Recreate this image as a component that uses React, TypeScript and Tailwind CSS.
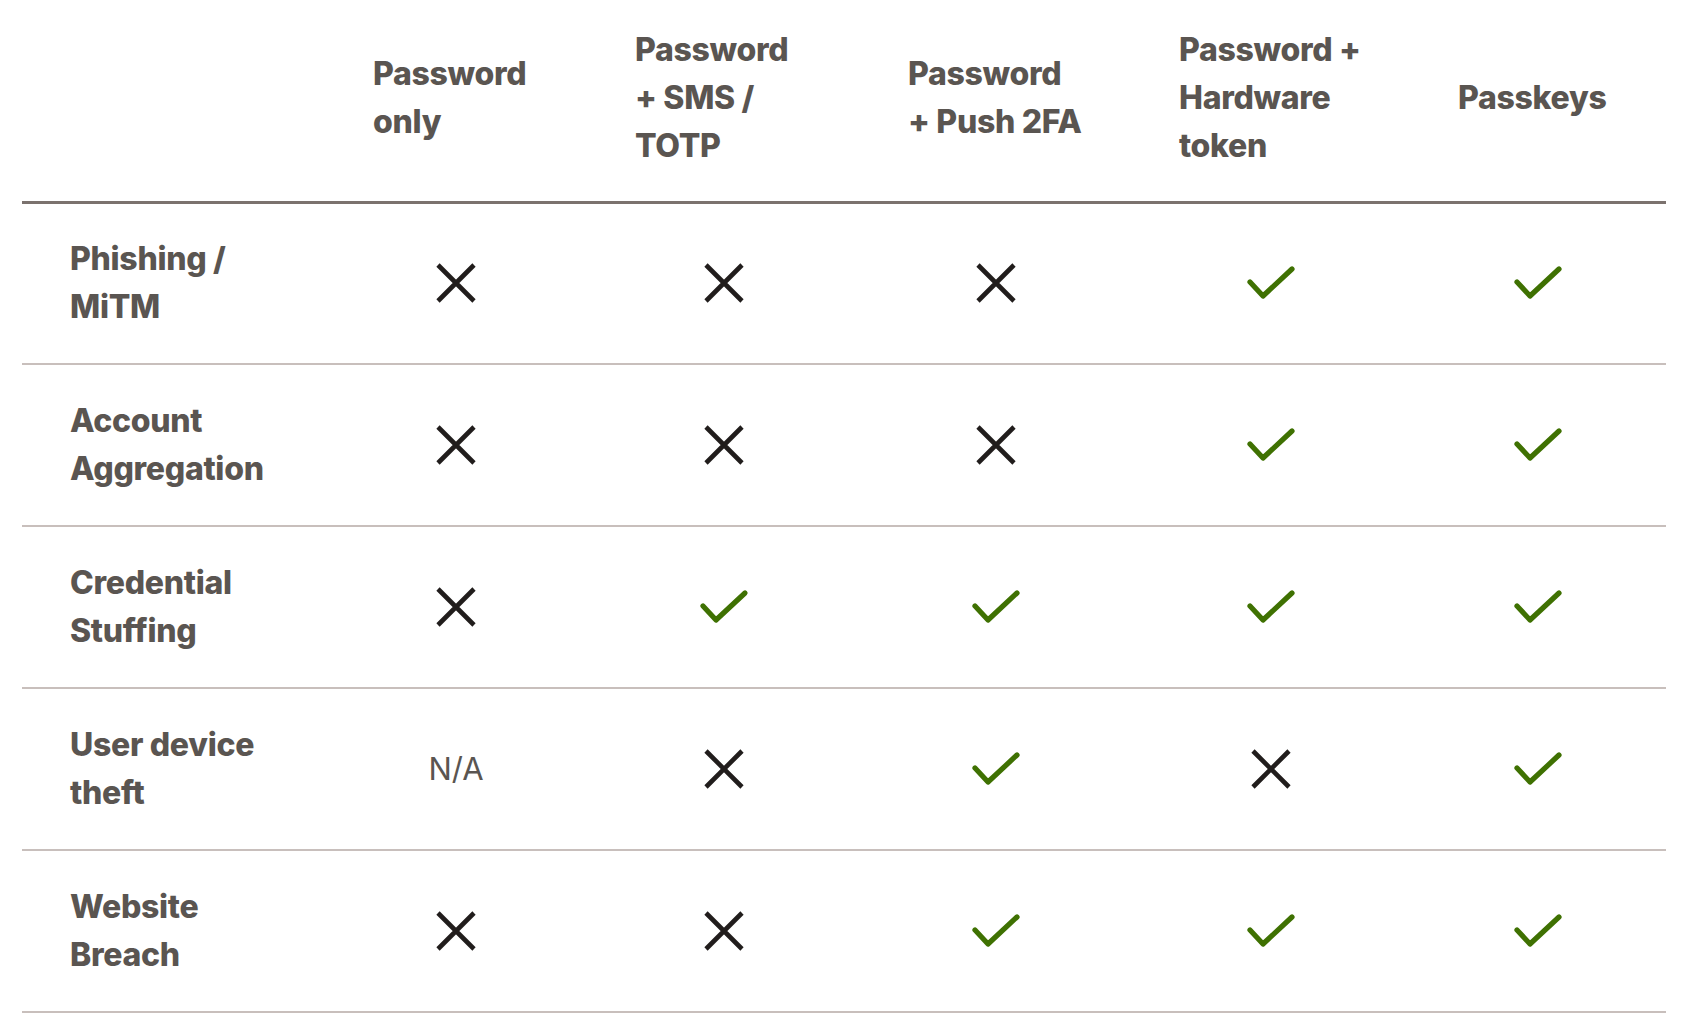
import React from 'react';

type Cell = 'yes' | 'no' | 'na';

const columns: string[][] = [
  ['Password', 'only'],
  ['Password', '+ SMS /', 'TOTP'],
  ['Password', '+ Push 2FA'],
  ['Password +', 'Hardware', 'token'],
  ['Passkeys'],
];

const rows: { label: string[]; cells: Cell[] }[] = [
  { label: ['Phishing /', 'MiTM'], cells: ['no', 'no', 'no', 'yes', 'yes'] },
  { label: ['Account', 'Aggregation'], cells: ['no', 'no', 'no', 'yes', 'yes'] },
  { label: ['Credential', 'Stuffing'], cells: ['no', 'yes', 'yes', 'yes', 'yes'] },
  { label: ['User device', 'theft'], cells: ['na', 'no', 'yes', 'no', 'yes'] },
  { label: ['Website', 'Breach'], cells: ['no', 'no', 'yes', 'yes', 'yes'] },
];

function Cross() {
  return (
    <svg width="44" height="44" viewBox="0 0 44 44" className="inline-block">
      <path d="M4 4L40 40M40 4L4 40" stroke="#211d1c" strokeWidth="4.6" fill="none" />
    </svg>
  );
}

function Check() {
  return (
    <svg width="50" height="36" viewBox="0 0 50 36" className="inline-block">
      <path
        d="M4 17L17 31L46 4"
        stroke="#3f7102"
        strokeWidth="5.2"
        fill="none"
        strokeLinecap="round"
        strokeLinejoin="round"
      />
    </svg>
  );
}

function Lines({ lines }: { lines: string[] }) {
  return (
    <>
      {lines.map((l, i) => (
        <span key={i} className="block whitespace-nowrap">
          {l}
        </span>
      ))}
    </>
  );
}

export default function App() {
  return (
    <div className="min-h-screen bg-white pl-[22px] font-['Inter',sans-serif]">
      <table className="w-[1644px] table-fixed border-collapse">
        <colgroup>
          <col className="w-[303px]" />
          <col className="w-[262px]" />
          <col className="w-[273px]" />
          <col className="w-[271px]" />
          <col className="w-[279px]" />
          <col className="w-[256px]" />
        </colgroup>
        <thead>
          <tr className="h-[202px] border-b-[3px] border-[#7b726e]">
            <th />
            {columns.map((c, i) => (
              <th
                key={i}
                className="px-12 pt-[26px] pb-[30px] text-left align-middle text-[32px] leading-[48px] font-extrabold tracking-[-0.3px] text-[#5a5551]"
              >
                <Lines lines={c} />
              </th>
            ))}
          </tr>
        </thead>
        <tbody>
          {rows.map((r, i) => (
            <tr key={i} className="h-[162px] border-b-2 border-[#c8bfbc]">
              <td className="px-12 align-middle text-[32px] leading-[48px] font-extrabold tracking-[-0.3px] text-[#5a5551]">
                <Lines lines={r.label} />
              </td>
              {r.cells.map((c, j) => (
                <td key={j} className="px-12 text-center align-middle">
                  {c === 'yes' && <Check />}
                  {c === 'no' && <Cross />}
                  {c === 'na' && (
                    <span className="text-[31px] leading-none text-[#5a5551]">N/A</span>
                  )}
                </td>
              ))}
            </tr>
          ))}
        </tbody>
      </table>
    </div>
  );
}
